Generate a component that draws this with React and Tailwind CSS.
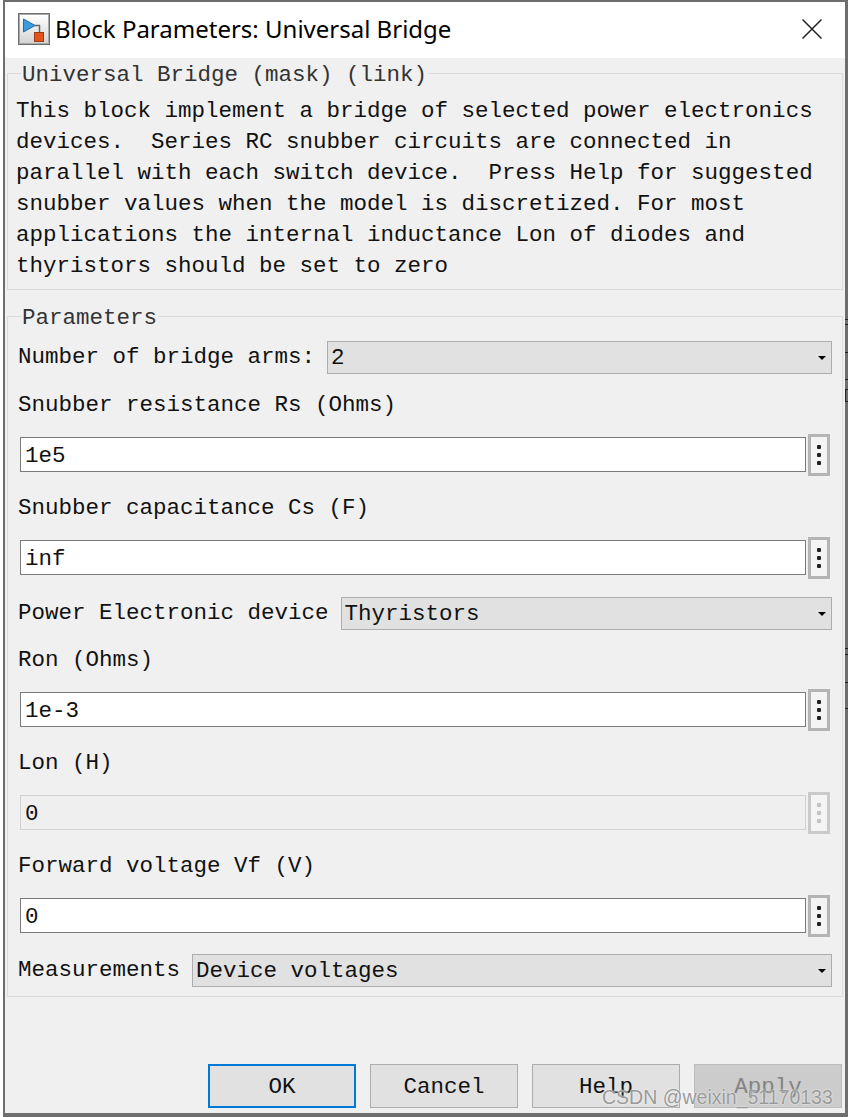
const mono = "font-['Liberation_Mono',monospace] text-[22.5px] leading-[31px] text-[#111]"

// bits of the diagram behind the window that show on its right edge
const edgeTicks = [319, 324, 352, 379, 648, 654, 682, 708]

function BlockIcon() {
  return (
    <svg width="32" height="32" viewBox="0 0 32 32" className="shrink-0">
      <defs>
        <linearGradient id="iconBg" x1="0" y1="0" x2="0" y2="1">
          <stop offset="0" stopColor="#ffffff" />
          <stop offset="1" stopColor="#d4d4d4" />
        </linearGradient>
      </defs>
      <rect x="0.5" y="0.5" width="31" height="31" fill="#a8a8a8" stroke="#6f6f6f" />
      <rect x="2" y="2" width="28" height="28" fill="url(#iconBg)" />
      <path d="M16 12.5 H21.5 V19" fill="none" stroke="#666" strokeWidth="1.5" />
      <path d="M5.5 6 L17 12.5 L5.5 19 Z" fill="#3d9be0" stroke="#1f6ea8" />
      <rect x="16.5" y="19.5" width="9" height="9" fill="#e2541c" stroke="#9c3a12" />
    </svg>
  )
}

function Legend({ children }) {
  return <legend className={`ml-[13px] px-[1px] pt-[4px] text-[#333] ${mono}`}>{children}</legend>
}

function Label({ className = '', children }) {
  return <div className={`pl-[10px] ${mono} ${className}`}>{children}</div>
}

function Select({ value, label }) {
  return (
    <div className="flex items-center pl-[10px] pr-[10px]">
      <span className={`${mono} mr-[12px] whitespace-nowrap`}>{label}</span>
      <div className="flex h-[33px] flex-1 items-center justify-between border border-[#adadad] bg-[#e1e1e1] pl-[3px] pr-[5px]">
        <span className={`${mono} pt-[2px]`}>{value}</span>
        <span className="h-0 w-0 border-x-[4px] border-t-[4px] border-x-transparent border-t-black" />
      </div>
    </div>
  )
}

function Field({ value, disabled }) {
  return (
    <div className="flex items-center pl-[12px] pr-[12px]">
      <div
        className={`mb-[1px] flex h-[35px] flex-1 items-center border pl-[4px] ${
          disabled ? 'border-[#d0d0d0] bg-[#efefef]' : 'border-[#7a7a7a] bg-white'
        }`}
      >
        <span className={`${mono} pt-[4px] ${disabled ? 'text-[#8a8a8a]' : ''}`}>{value}</span>
      </div>
      <div
        className={`ml-[2px] flex h-[42px] w-[22px] flex-col items-center justify-center gap-[4px] border-[3px] bg-[#f4f4f4] ${
          disabled ? 'border-[#cacaca]' : 'border-[#b4b4b4]'
        }`}
      >
        {[0, 1, 2].map((i) => (
          <span
            key={i}
            className={`h-[4px] w-[4px] rounded-[1px] ${disabled ? 'bg-[#c0c0c0]' : 'bg-[#222]'}`}
          />
        ))}
      </div>
    </div>
  )
}

function DialogButton({ children, variant }) {
  const look =
    variant === 'default'
      ? 'border-2 border-[#0078d7] bg-[#e1e1e1] text-[#111]'
      : variant === 'disabled'
        ? 'border border-[#bcbcbc] bg-[#cccccc] text-[#838383]'
        : 'border border-[#adadad] bg-[#e1e1e1] text-[#111]'
  return (
    <div className={`flex h-[44px] w-[148px] items-center justify-center ${look}`}>
      <span className="pt-[3px] font-['Liberation_Mono',monospace] text-[22.5px] leading-[31px]">{children}</span>
    </div>
  )
}

export default function App() {
  return (
    <div className="relative h-[1117px] w-[848px] overflow-hidden bg-white">
      <div className="ml-[3px] flex h-[1117px] flex-col border-y-2 border-r-[3px] border-b-4 border-l-2 border-[#6e6e6e] bg-[#f0f0f0]">
        <div className="flex h-[56px] shrink-0 items-center bg-white pb-[2px] pl-[13px] pr-[23px]">
          <BlockIcon />
          <span className="ml-[5px] font-['Noto_Sans',sans-serif] text-[24px] text-black">
            Block Parameters: Universal Bridge
          </span>
          <svg width="20" height="20" viewBox="0 0 20 20" className="ml-auto">
            <path d="M0.5 0.5 L19.5 19.5 M19.5 0.5 L0.5 19.5" stroke="#222" strokeWidth="1.5" />
          </svg>
        </div>

        <div className="flex flex-1 flex-col px-[2px]">
          <fieldset className="mt-[-2px] h-[234px] border border-[#dcdcdc]">
            <Legend>Universal Bridge (mask) (link)</Legend>
            <div className={`pl-[8px] pt-[5px] whitespace-pre ${mono}`}>
              {`This block implement a bridge of selected power electronics
devices.  Series RC snubber circuits are connected in
parallel with each switch device.  Press Help for suggested
snubber values when the model is discretized. For most
applications the internal inductance Lon of diodes and
thyristors should be set to zero`}
            </div>
          </fieldset>

          <fieldset className="mt-[9px] h-[698px] border border-[#dcdcdc]">
            <Legend>Parameters</Legend>
            <div className="pt-[7px]">
              <Select label="Number of bridge arms:" value="2" />
              <Label className="mt-[16px]">Snubber resistance Rs (Ohms)</Label>
              <div className="mt-[13px]"><Field value="1e5" /></div>
              <Label className="mt-[17px]">Snubber capacitance Cs (F)</Label>
              <div className="mt-[13px]"><Field value="inf" /></div>
              <div className="mt-[18px]"><Select label="Power Electronic device" value="Thyristors" /></div>
              <Label className="mt-[15px]">Ron (Ohms)</Label>
              <div className="mt-[13px]"><Field value="1e-3" /></div>
              <Label className="mt-[17px]">Lon (H)</Label>
              <div className="mt-[13px]"><Field value="0" disabled /></div>
              <Label className="mt-[17px]">Forward voltage Vf (V)</Label>
              <div className="mt-[13px]"><Field value="0" /></div>
              <div className="mt-[17px]"><Select label="Measurements" value="Device voltages" /></div>
            </div>
          </fieldset>

          <div className="mt-auto mb-[5px] flex justify-end gap-[14px] pr-[1px]">
            <DialogButton variant="default">OK</DialogButton>
            <DialogButton>Cancel</DialogButton>
            <DialogButton>Help</DialogButton>
            <DialogButton variant="disabled">Apply</DialogButton>
          </div>
        </div>
      </div>

      {edgeTicks.map((y) => (
        <span key={y} className="absolute left-[845px] h-[1px] w-[3px] bg-[#222]" style={{ top: y }} />
      ))}
      <span className="absolute left-[845px] top-[389px] h-[13px] w-[3px] border-y border-l border-[#222]" />

      <span className="absolute left-[602px] top-[1086px] font-['Liberation_Sans',sans-serif] text-[19.5px] leading-[22px] text-[#9a9a9a] [text-shadow:0_0_2px_#ffffff]">
        CSDN @weixin_51170133
      </span>
    </div>
  )
}
